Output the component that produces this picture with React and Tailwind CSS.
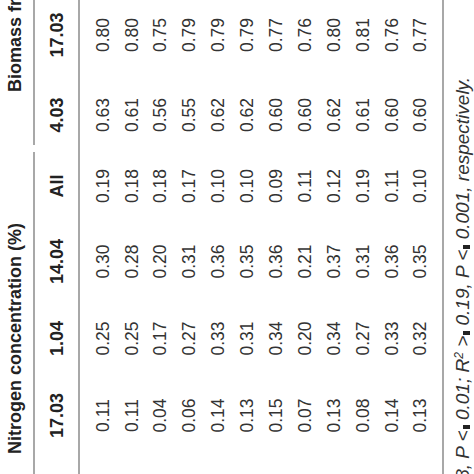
import React from "react";

const rows = [
  ["0.11", "0.25", "0.30", "0.19", "0.63", "0.80"],
  ["0.11", "0.25", "0.28", "0.18", "0.61", "0.80"],
  ["0.04", "0.17", "0.20", "0.18", "0.56", "0.75"],
  ["0.06", "0.27", "0.31", "0.17", "0.55", "0.79"],
  ["0.14", "0.33", "0.36", "0.10", "0.62", "0.79"],
  ["0.13", "0.31", "0.35", "0.10", "0.62", "0.79"],
  ["0.15", "0.34", "0.36", "0.09", "0.60", "0.77"],
  ["0.07", "0.20", "0.21", "0.11", "0.60", "0.76"],
  ["0.13", "0.34", "0.37", "0.12", "0.62", "0.80"],
  ["0.08", "0.27", "0.31", "0.19", "0.61", "0.81"],
  ["0.14", "0.33", "0.36", "0.11", "0.60", "0.76"],
  ["0.13", "0.32", "0.35", "0.10", "0.60", "0.77"],
];

const heads = ["17.03", "1.04", "14.04", "All", "4.03", "17.03"];
const widths = ["w-[77px]", "w-[77px]", "w-[77px]", "w-[74px]", "w-[68px]", "w-[92px]"];

function Le() {
  return (
    <span className="inline-flex items-end">
      &lt;<span className="inline-block w-[4px] h-[7px] bg-[#222] ml-[1px] mb-[2px]"></span>
    </span>
  );
}
function Ge() {
  return (
    <span className="inline-flex items-end">
      &gt;<span className="inline-block w-[4px] h-[7px] bg-[#222] ml-[1px] mb-[2px]"></span>
    </span>
  );
}

export default function App() {
  return (
    <div className="w-[474px] h-[474px] overflow-hidden bg-white relative">
      <div
        className="w-[474px] h-[474px] -rotate-90 flex flex-col text-[#222]"
        style={{ fontFamily: '"Liberation Sans", Arial, sans-serif' }}
      >
        {/* group header */}
        <div className="flex h-[35px] shrink-0 w-[485px]">
          <div className="w-[322px] border-b-2 border-[#a8a8a8] pl-[20px] pt-[4px] text-[18px] font-bold leading-[22px] whitespace-nowrap">
            Nitrogen concentration (%)
          </div>
          <div className="w-[7px]"></div>
          <div className="flex-1 border-b-2 border-[#a8a8a8] pl-[53px] pt-[4px] text-[18px] font-bold leading-[22px] whitespace-nowrap overflow-hidden">
            Biomass fraction (%)
          </div>
        </div>
        {/* sub header */}
        <div className="flex h-[45px] shrink-0 w-[485px] border-b-2 border-[#a8a8a8] items-center pl-[20px] text-[18px] font-bold">
          {heads.map((h, i) => (
            <div key={i} className={`${widths[i]} text-center leading-none`}>
              {h}
            </div>
          ))}
        </div>
        {/* data */}
        <div className="flex flex-col pt-[9px] pb-[6px] w-[485px] border-b-2 border-[#a8a8a8] shrink-0">
          {rows.map((r, ri) => (
            <div key={ri} className="flex h-[28.9px] items-center pl-[20px] text-[17.5px] text-[#333]">
              {r.map((v, i) => (
                <div key={i} className={`${widths[i]} text-center leading-none`}>
                  {v}
                </div>
              ))}
            </div>
          ))}
        </div>
        {/* footnote */}
        <div className="flex justify-end pr-[77px] pt-[9px] text-[19px] italic text-[#333] whitespace-nowrap leading-none">
          <span>
            8, P <Le /> 0.01; R<sup className="text-[12px]">2</sup> <Ge /> 0.19, P <Le /> 0.001, respectively.
          </span>
        </div>
      </div>
    </div>
  );
}
